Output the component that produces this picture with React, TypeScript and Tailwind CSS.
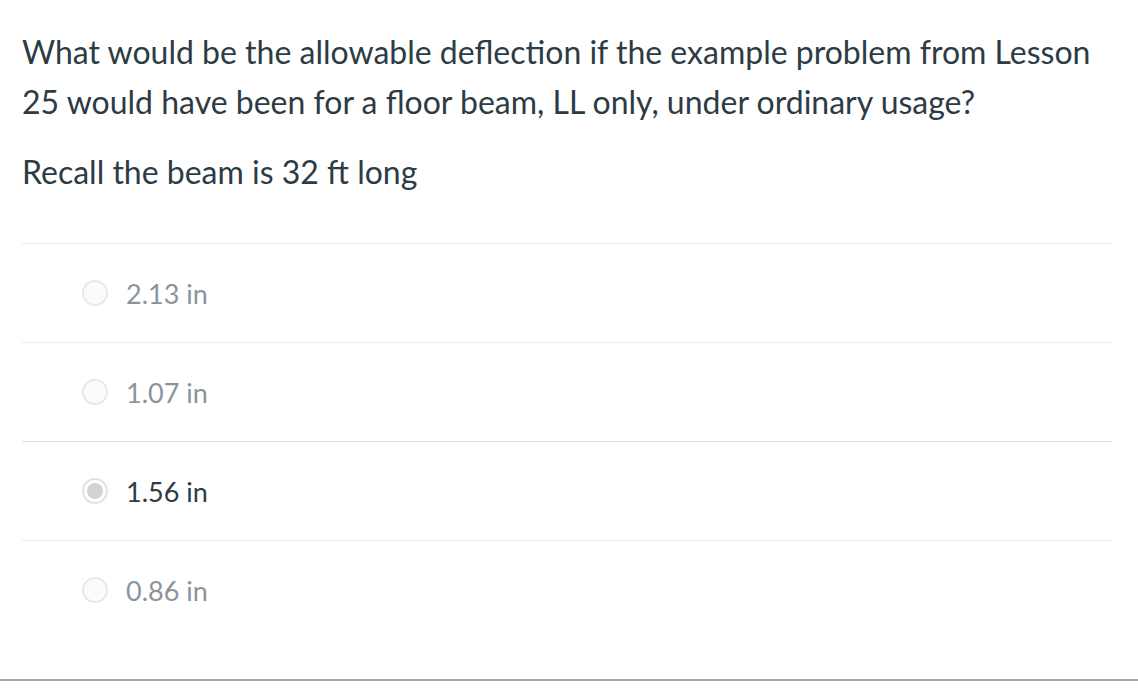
import React from 'react';

const answers = [
  { id: 'a', label: '2.13 in', selected: false },
  { id: 'b', label: '1.07 in', selected: false },
  { id: 'c', label: '1.56 in', selected: true },
  { id: 'd', label: '0.86 in', selected: false },
];

export default function App() {
  return (
    <div className="w-[1138px] h-[690px] bg-white overflow-hidden flex flex-col" style={{ fontFamily: 'Lato, "Noto Sans", sans-serif' }}>
      <div className="flex-1 pl-[22px] pr-[26px]">
        {/* Question */}
        <div className="text-[#2d3b45] text-[32px] leading-[50px] pt-[27px]">
          <p>What would be the allowable deflection if the example problem from Lesson 25 would have been for a floor beam, LL only, under ordinary usage?</p>
          <p className="mt-[20px]">Recall the beam is 32 ft long</p>
        </div>

        {/* Answers */}
        <div className="mt-[46px]">
          {answers.map((a, i) => (
            <div
              key={a.id}
              className={`h-[99px] flex items-center pl-[60px] border-t ${i === 2 ? 'border-[#dcdcdc]' : 'border-[#ececec]'}`}
            >
              <div
                className={`w-[26px] h-[26px] rounded-full border-2 flex items-center justify-center ${
                  a.selected ? 'border-[#e2e2e2] bg-white' : 'border-[#e8e8e8] bg-[#fbfbfb]'
                }`}
              >
                {a.selected && <div className="w-[16px] h-[16px] rounded-full bg-[#d3d3d3]" />}
              </div>
              <span className={`ml-[18px] text-[27px] pt-[3px] ${a.selected ? 'text-[#2d3b45]' : 'text-[#8b949b]'}`}>{a.label}</span>
            </div>
          ))}
        </div>
      </div>
      <div className="h-[2px] bg-[#a8a8a8] mb-[9px]" />
    </div>
  );
}
